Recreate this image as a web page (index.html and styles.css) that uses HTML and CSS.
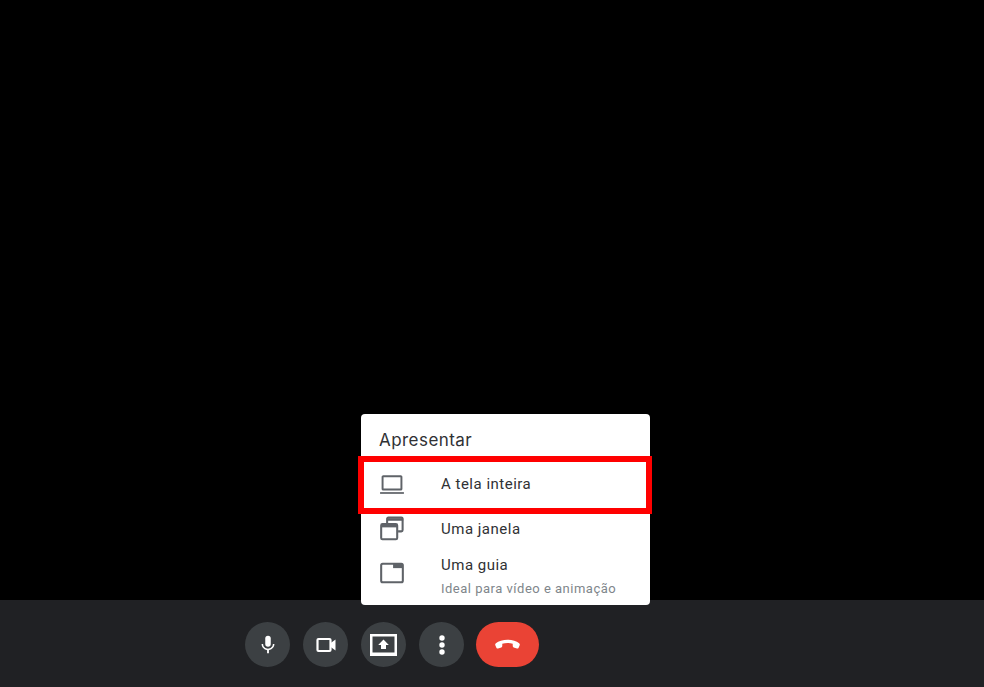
FILE: index.html
```html
<!DOCTYPE html>
<html lang="pt">
<head>
<meta charset="utf-8">
<title>Apresentar</title>
<link rel="stylesheet" href="styles.css">
</head>
<body>
<main class="stage">
  <section class="menu">
    <h2 class="menu-title">Apresentar</h2>
    <div class="item item-first">
      <svg class="item-icon" viewBox="0 0 24 24" width="26" height="26"><path fill="none" stroke="#5f6368" stroke-width="1.8" d="M3.9 4.9h16.2a.6.6 0 0 1 .6.6v11a.6.6 0 0 1-.6.6H3.900a.6.6 0 0 1-.6-.6v-11a.6.6 0 0 1 .6-.6z"/><path fill="#5f6368" d="M1 19.500h22v1.600H1z"/></svg>
      <span class="item-label">A tela inteira</span>
    </div>
    <div class="item item-second">
      <svg class="item-icon" viewBox="0 0 24 24" width="26" height="26"><path fill="none" stroke="#5f6368" stroke-width="1.900" d="M7.500 7V2.600c0-.7.5-1.200 1.200-1.200h11.900c.7 0 1.200.5 1.200 1.200v10.400c0 .7-.5 1.200-1.200 1.200h-3"/><path fill="#5f6368" d="M7.500 2h14.800v2.400H7.500z"/><rect x="2" y="7.500" width="14.800" height="14" rx="1.200" fill="none" stroke="#5f6368" stroke-width="1.900"/><path fill="#5f6368" d="M2 7.500h14.800v3H2z"/></svg>
      <span class="item-label">Uma janela</span>
    </div>
    <div class="item item-third">
      <svg class="item-icon item-icon-raised" viewBox="0 0 24 24" width="26" height="26"><rect x="2" y="3.500" width="20" height="17" rx="1.400" fill="none" stroke="#5f6368" stroke-width="1.900"/><path fill="#5f6368" d="M13 3.500h9v4h-9z"/></svg>
      <div class="item-text">
        <span class="item-label">Uma guia</span>
        <span class="item-sub">Ideal para vídeo e animação</span>
      </div>
    </div>
    <div class="highlight"></div>
  </section>
</main>
<footer class="bar">
  <button class="round" type="button" aria-label="Microfone">
    <svg viewBox="0 0 24 24" width="22" height="22"><path fill="#fff" d="M12 14a3 3 0 0 0 3-3V5a3 3 0 0 0-6 0v6a3 3 0 0 0 3 3z"/><path fill="#fff" d="M17.300 11c0 3-2.500 5.100-5.300 5.100S6.700 14 6.700 11H5c0 3.400 2.700 6.200 6 6.700V21h2v-3.300c3.300-.5 6-3.300 6-6.700h-1.700z"/></svg>
  </button>
  <button class="round" type="button" aria-label="Câmera">
    <svg viewBox="0 0 24 24" width="24" height="24"><rect x="3.500" y="6" width="13" height="12" rx="1" fill="none" stroke="#fff" stroke-width="2.200"/><path fill="#fff" d="M16 10.500 21.500 6.500v11L16 13.500z"/></svg>
  </button>
  <button class="round" type="button" aria-label="Apresentar">
    <svg viewBox="0 0 27 22" width="27" height="22"><path fill="#fff" d="M0 0h27v22H0zM2.500 2.500v16h22v-16z"/><path fill="#fff" d="M13.500 5.500 18.800 11H16v4h-5v-4H8.200z"/></svg>
  </button>
  <button class="round" type="button" aria-label="Mais opções">
    <svg viewBox="0 0 24 24" width="24" height="24"><circle cx="12" cy="5" r="2.700" fill="#fff"/><circle cx="12" cy="12" r="2.700" fill="#fff"/><circle cx="12" cy="19" r="2.700" fill="#fff"/></svg>
  </button>
  <button class="hangup" type="button" aria-label="Encerrar">
    <svg viewBox="0 0 28 12" width="29" height="11"><path fill="#fff" d="M14 .8C9 .8 4.300 2.200 1.300 4.700.5 5.400.4 6.100.7 6.800l1.300 2.900c.4.700 1 .9 1.700.7l3.600-1.200c.7-.3 1-.8 1-1.500V5.200c1.900-.6 3.700-.8 5.700-.8s3.800.2 5.700.8v2.500c0 .7.300 1.200 1 1.500l3.600 1.200c.7.200 1.300 0 1.700-.7l1.300-2.900c.3-.7.200-1.400-.6-2.100C23.700 2.200 19 .8 14 .8z"/></svg>
  </button>
</footer>
</body>
</html>
```
FILE: styles.css
```css
html, body {
  margin: 0;
  height: 100%;
  background: #000;
}
body {
  display: flex;
  flex-direction: column;
  font-family: Roboto, "Liberation Sans", sans-serif;
  overflow: hidden;
}
.stage {
  flex: 1;
  position: relative;
}
.menu {
  position: absolute;
  left: 361px;
  top: 414px;
  z-index: 2;
  width: 289px;
  height: 191px;
  box-sizing: border-box;
  background: #fff;
  border-radius: 4px;
}
.menu-title {
  margin: 0;
  padding: 16px 18px 0;
  font-family: Inter, Roboto, sans-serif;
  font-size: 17px;
  line-height: 21px;
  font-weight: 400;
  letter-spacing: 0.45px;
  color: #303134;
}
.item {
  display: flex;
  align-items: center;
  padding-left: 18px;
}
.item-first { margin-top: 11px; height: 44px; }
.item-second { height: 44px; padding-top: 1px; box-sizing: border-box; }
.item-third { height: 46px; padding-top: 5px; box-sizing: border-box; }
.item-icon {
  flex: none;
  width: 26px;
  height: 26px;
  margin-right: 36px;
}
.item-icon-raised { margin-top: -5px; }
.item-label {
  display: block;
  font-size: 15px;
  line-height: 20px;
  letter-spacing: 0.5px;
  color: #303134;
}
.item-sub {
  display: block;
  margin-top: 6px;
  font-size: 13px;
  line-height: 16px;
  letter-spacing: 0.5px;
  color: #80868b;
}
.highlight {
  position: absolute;
  left: -3px;
  top: 42px;
  width: 294px;
  height: 58px;
  box-sizing: border-box;
  border: 6px solid #f00;
}
.bar {
  flex: none;
  height: 87px;
  background: #202124;
  display: flex;
  align-items: center;
  gap: 13px;
  padding-left: 245px;
  box-sizing: border-box;
}
.round, .hangup {
  border: 0;
  padding: 0;
  display: flex;
  align-items: center;
  justify-content: center;
  height: 45px;
  margin-top: 2px;
}
.round {
  width: 45px;
  border-radius: 50%;
  background: #3c4043;
}
.hangup {
  width: 63px;
  margin-left: -1px;
  border-radius: 23px;
  background: #ea4335;
}
```
